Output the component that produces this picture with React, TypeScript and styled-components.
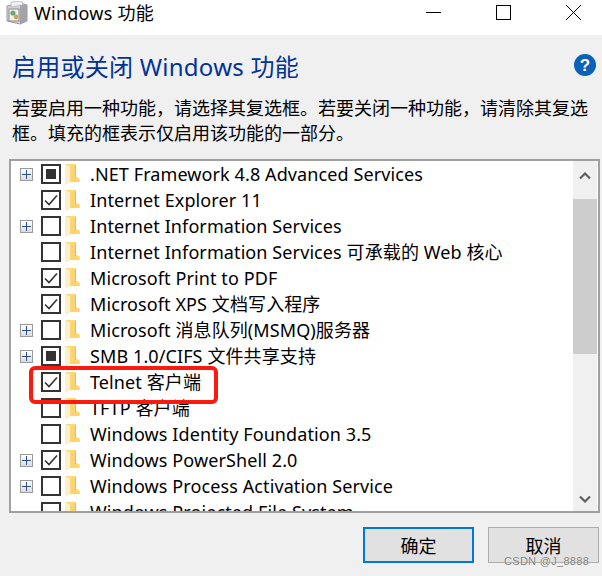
// App.tsx
import React from 'react';
import styled, { createGlobalStyle } from 'styled-components';

const GlobalStyle = createGlobalStyle`
  html, body {
    margin: 0;
    padding: 0;
    background: #f0f0f0;
  }
  body {
    font-family: "Noto Sans", "Noto Sans CJK SC", sans-serif;
    overflow: hidden;
  }
`;

const Page = styled.div`
  position: relative;
  width: 602px;
  height: 576px;
  display: flex;
  flex-direction: column;
  overflow: hidden;
  background: #f0f0f0;
`;

const TitleBar = styled.div`
  height: 35px;
  flex: none;
  display: flex;
  align-items: flex-start;
  background: #fff;
  padding-left: 6px;
`;

const AppIconSvg = styled.svg`
  flex: none;
  margin-top: 1px;
`;

const TitleText = styled.div`
  margin-left: 6px;
  flex: 1;
  font-size: 18px;
  letter-spacing: 0.25px;
  color: #000;
  line-height: 26px;
`;

const WinButtons = styled.div`
  display: flex;
  margin-top: 5px;
  margin-right: -6px;
`;

const WinButton = styled.div`
  width: 70px;
  height: 15px;
  display: flex;
  align-items: center;
  justify-content: center;
`;

const Header = styled.div`
  display: flex;
  align-items: flex-start;
  justify-content: space-between;
  padding: 15px 6px 0 12px;
  height: 34px;
`;

const Heading = styled.div`
  font-size: 24px;
  letter-spacing: 0.25px;
  line-height: 34px;
  color: #003399;
`;

const HelpIcon = styled.svg`
  flex: none;
  margin-top: 4px;
`;

const Description = styled.div`
  width: 580px;
  margin: 12px 0 0 12px;
  font-size: 18px;
  line-height: 25px;
  color: #000;
`;

const ListBox = styled.div`
  height: 350px;
  margin: 13px 2px 0 9px;
  display: flex;
  border: 2px solid #a0a0a0;
  background: #fff;
  overflow: hidden;
`;

const Rows = styled.div`
  flex: 1;
  overflow: hidden;
`;

const Row = styled.div`
  height: 26px;
  display: flex;
  align-items: center;
  padding-left: 9px;
`;

const ExpanderSlot = styled.div`
  width: 13px;
  height: 13px;
  margin-right: 8px;
  margin-top: 1px;
`;

const Expander = styled.div`
  position: relative;
  box-sizing: border-box;
  width: 13px;
  height: 13px;
  border: 1px solid #9a9a9a;
  background: linear-gradient(#ffffff, #dcdcdc);
  &::before {
    content: '';
    position: absolute;
    left: 1px;
    right: 1px;
    top: 5px;
    height: 1px;
    background: #2d4d8c;
  }
  &::after {
    content: '';
    position: absolute;
    top: 1px;
    bottom: 1px;
    left: 5px;
    width: 1px;
    background: #2d4d8c;
  }
`;

const CheckBox = styled.div`
  box-sizing: border-box;
  flex: none;
  width: 20px;
  height: 20px;
  border: 2px solid #333;
  background: #fff;
  display: flex;
  align-items: center;
  justify-content: center;
`;

const Fill = styled.div`
  width: 10px;
  height: 10px;
  background: #333;
`;

const FolderIcon = styled.svg`
  flex: none;
  width: 15px;
  height: 21px;
  margin-left: 4px;
`;

const Label = styled.div`
  margin-left: 10px;
  font-size: 18px;
  letter-spacing: 0.1px;
  line-height: 26px;
  color: #000;
  white-space: nowrap;
`;

const ScrollBar = styled.div`
  flex: none;
  width: 24px;
  margin-right: 1px;
  display: flex;
  flex-direction: column;
  background: #f0f0f0;
`;

const ScrollButton = styled.div<{ $height: number }>`
  height: ${p => p.$height}px;
  flex: none;
  display: flex;
  align-items: center;
  justify-content: center;
`;

const ScrollThumb = styled.div`
  height: 155px;
  flex: none;
  margin-top: 8px;
  background: #cdcdcd;
`;

const ScrollSpace = styled.div`
  flex: 1;
`;

const Footer = styled.div`
  display: flex;
  justify-content: flex-end;
  gap: 14px;
  padding: 14px 3px 0 0;
`;

const DialogButton = styled.div<{ $primary?: boolean }>`
  box-sizing: border-box;
  width: 111px;
  height: 36px;
  display: flex;
  align-items: center;
  justify-content: center;
  background: #e1e1e1;
  border: ${p => (p.$primary ? '2px solid #0078d7' : '1px solid #adadad')};
  font-size: 18px;
  color: #000;
`;

const Highlight = styled.div`
  position: absolute;
  left: 29px;
  top: 366px;
  width: 189px;
  height: 38px;
  box-sizing: border-box;
  border: 4px solid #fb1a0e;
  border-radius: 6px;
`;

const Watermark = styled.div`
  position: absolute;
  left: 504px;
  top: 553px;
  font-family: "Liberation Sans", sans-serif;
  font-size: 11px;
  line-height: 16px;
  letter-spacing: 0.3px;
  color: rgba(110, 110, 110, 0.9);
  text-shadow: 0 0 1px #fff;
`;

type CheckState = 'off' | 'on' | 'mixed';

const features: { label: string; expand?: boolean; state: CheckState }[] = [
  { label: '.NET Framework 4.8 Advanced Services', expand: true, state: 'mixed' },
  { label: 'Internet Explorer 11', state: 'on' },
  { label: 'Internet Information Services', expand: true, state: 'off' },
  { label: 'Internet Information Services 可承载的 Web 核心', state: 'off' },
  { label: 'Microsoft Print to PDF', state: 'on' },
  { label: 'Microsoft XPS 文档写入程序', state: 'on' },
  { label: 'Microsoft 消息队列(MSMQ)服务器', expand: true, state: 'off' },
  { label: 'SMB 1.0/CIFS 文件共享支持', expand: true, state: 'mixed' },
  { label: 'Telnet 客户端', state: 'on' },
  { label: 'TFTP 客户端', state: 'off' },
  { label: 'Windows Identity Foundation 3.5', state: 'off' },
  { label: 'Windows PowerShell 2.0', expand: true, state: 'on' },
  { label: 'Windows Process Activation Service', expand: true, state: 'off' },
  { label: 'Windows Projected File System', state: 'off' },
];

const Folder = () => (
  <FolderIcon viewBox="0 0 15 21">
    <path d="M0 0 H11 V13 L14.5 14 V18 H5 V19 H0 Z" fill="#fbd974" />
    <path d="M6 2 H11 V15 H14.5 V18 H6 Z" fill="#fdd36a" />
    <path d="M10 1 H11 V14 H10 Z" fill="#eabd50" />
    <path d="M0 0 L6 3 V18 L0 21 Z" fill="#fdf0c6" />
    <path d="M5 3 L6 3 V18 L5 18.5 Z" fill="#f5d88a" />
  </FolderIcon>
);

const AppIcon = () => (
  <AppIconSvg width="22" height="24" viewBox="0 0 22 24">
    <path d="M1 5 L14 2 L21 4 V20 L14 23 L1 20 Z" fill="#d4d4d6" stroke="#9a9a9e" />
    <path d="M14 2 L21 4 V20 L14 23 Z" fill="#a4a4a8" />
    <rect x="3" y="8" width="10" height="12" fill="#eef1ee" stroke="#8a8a8a" />
    <circle cx="7" cy="12" r="2.6" fill="#6ea679" />
    <circle cx="10" cy="16" r="2.4" fill="#c9a850" />
    <path d="M5 1 L16 0 L17 4 L5 6 Z" fill="#eceff4" stroke="#a0a4ac" strokeWidth="0.6" />
  </AppIconSvg>
);

const Check = () => (
  <svg width="16" height="16" viewBox="0 0 16 16">
    <path d="M2 8.5 L6 12.5 L14 3.5" fill="none" stroke="#333" strokeWidth="1.6" />
  </svg>
);

const Chevron = ({ down }: { down?: boolean }) => (
  <svg width="12" height="8" viewBox="0 0 12 8">
    <path d={down ? 'M1 1.5 L6 6.5 L11 1.5' : 'M1 6.5 L6 1.5 L11 6.5'} fill="none" stroke="#606060" strokeWidth="2.2" />
  </svg>
);

const App: React.FC = () => {
  return (
    <Page>
      <GlobalStyle />
      <TitleBar>
        <AppIcon />
        <TitleText>Windows 功能</TitleText>
        <WinButtons>
          <WinButton>
            <svg width="15" height="15" viewBox="0 0 15 15">
              <path d="M0 7.5 H15" stroke="#000" strokeWidth="1" />
            </svg>
          </WinButton>
          <WinButton>
            <svg width="15" height="15" viewBox="0 0 15 15">
              <rect x="0.5" y="0.5" width="14" height="14" fill="none" stroke="#000" />
            </svg>
          </WinButton>
          <WinButton>
            <svg width="15" height="15" viewBox="0 0 15 15">
              <path d="M0 0 L15 15 M15 0 L0 15" stroke="#000" strokeWidth="1" />
            </svg>
          </WinButton>
        </WinButtons>
      </TitleBar>
      <Header>
        <Heading>启用或关闭 Windows 功能</Heading>
        <HelpIcon width="22" height="22" viewBox="0 0 22 22">
          <circle cx="11" cy="11" r="11" fill="#0a62b8" />
          <text x="11" y="17" textAnchor="middle" fontSize="17" fontWeight="bold" fontFamily="Liberation Sans" fill="#fff">?</text>
        </HelpIcon>
      </Header>
      <Description>
        若要启用一种功能，请选择其复选框。若要关闭一种功能，请清除其复选框。填充的框表示仅启用该功能的一部分。
      </Description>
      <ListBox>
        <Rows>
          {features.map(f => (
            <Row key={f.label}>
              <ExpanderSlot>{f.expand && <Expander />}</ExpanderSlot>
              <CheckBox>
                {f.state === 'on' && <Check />}
                {f.state === 'mixed' && <Fill />}
              </CheckBox>
              <Folder />
              <Label>{f.label}</Label>
            </Row>
          ))}
        </Rows>
        <ScrollBar>
          <ScrollButton $height={30}><Chevron /></ScrollButton>
          <ScrollThumb />
          <ScrollSpace />
          <ScrollButton $height={24}><Chevron down /></ScrollButton>
        </ScrollBar>
      </ListBox>
      <Footer>
        <DialogButton $primary>确定</DialogButton>
        <DialogButton>取消</DialogButton>
      </Footer>
      <Highlight />
      <Watermark>CSDN @J_8888</Watermark>
    </Page>
  );
};

export default App;
